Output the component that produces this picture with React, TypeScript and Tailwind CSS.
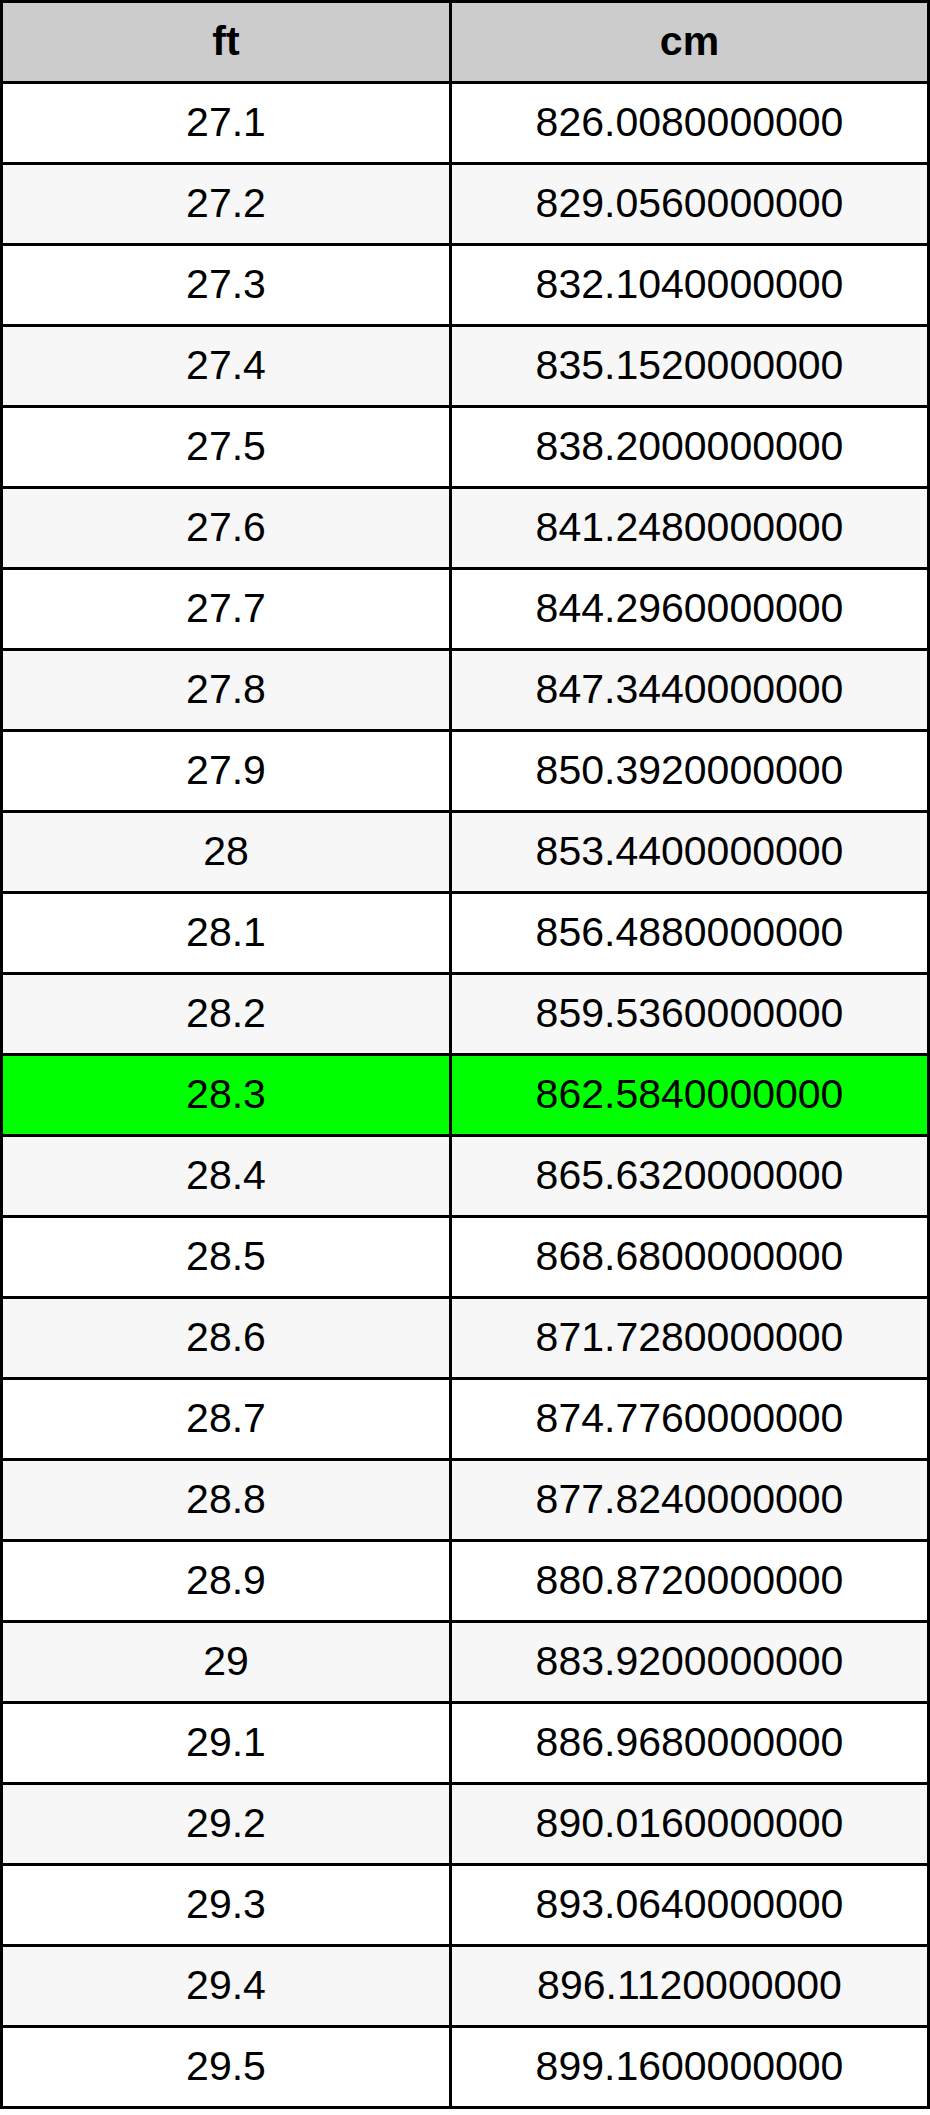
const rows: [string, string][] = [
  ["27.1", "826.0080000000"],
  ["27.2", "829.0560000000"],
  ["27.3", "832.1040000000"],
  ["27.4", "835.1520000000"],
  ["27.5", "838.2000000000"],
  ["27.6", "841.2480000000"],
  ["27.7", "844.2960000000"],
  ["27.8", "847.3440000000"],
  ["27.9", "850.3920000000"],
  ["28", "853.4400000000"],
  ["28.1", "856.4880000000"],
  ["28.2", "859.5360000000"],
  ["28.3", "862.5840000000"],
  ["28.4", "865.6320000000"],
  ["28.5", "868.6800000000"],
  ["28.6", "871.7280000000"],
  ["28.7", "874.7760000000"],
  ["28.8", "877.8240000000"],
  ["28.9", "880.8720000000"],
  ["29", "883.9200000000"],
  ["29.1", "886.9680000000"],
  ["29.2", "890.0160000000"],
  ["29.3", "893.0640000000"],
  ["29.4", "896.1120000000"],
  ["29.5", "899.1600000000"],
];

const App = () => {
  return (
    <div className="w-[930px] bg-white font-['Liberation_Sans',Arial,sans-serif] text-black">
      <div className="grid grid-cols-[446px_475px] gap-[3px] bg-black p-[3px] text-[41px]">
        <div className="flex h-[78px] items-center justify-center bg-[#cccccc] font-bold">ft</div>
        <div className="flex h-[78px] items-center justify-center bg-[#cccccc] font-bold">cm</div>
        {rows.map(([ft, cm], i) => {
          const bg = ft === "28.3" ? "bg-[#00ff00]" : i % 2 === 0 ? "bg-white" : "bg-[#f7f7f7]";
          return [
            <div key={ft + "a"} className={`flex h-[78px] items-center justify-center ${bg}`}>
              {ft}
            </div>,
            <div key={ft + "b"} className={`flex h-[78px] items-center justify-center ${bg}`}>
              {cm}
            </div>,
          ];
        })}
      </div>
    </div>
  );
};

export default App;
